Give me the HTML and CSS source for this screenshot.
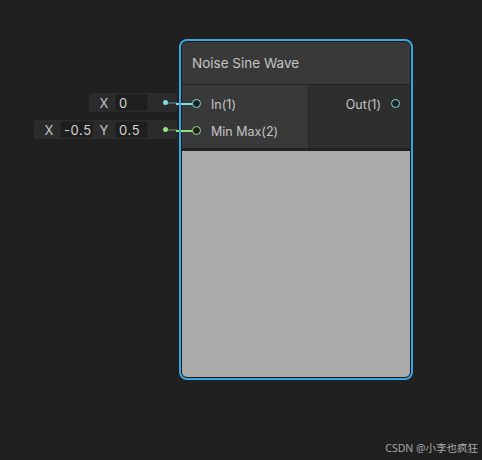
FILE: index.html
```html
<!DOCTYPE html>
<html>
<head>
<meta charset="utf-8">
<link rel="stylesheet" href="styles.css">
</head>
<body>
<div class="canvas">
  <div class="field-box fb-in">
    <span class="axis">X</span><span class="num">0</span>
    <span class="dot teal"></span><span class="stub teal-dim"></span>
  </div>
  <div class="field-box fb-mm">
    <span class="axis">X</span><span class="num">-0.5</span>
    <span class="axis">Y</span><span class="num">0.5</span>
    <span class="dot green"></span><span class="stub green-dim"></span>
  </div>

  <div class="node">
    <div class="node-inner">
      <div class="header">Noise Sine Wave</div>
      <div class="ports">
        <div class="inputs">
          <div class="port-row">
            <span class="wire teal"></span>
            <span class="port port-teal"></span>
            <span class="plabel">In(1)</span>
          </div>
          <div class="port-row">
            <span class="wire green"></span>
            <span class="port port-green"></span>
            <span class="plabel">Min Max(2)</span>
          </div>
        </div>
        <div class="outputs">
          <div class="port-row out">
            <span class="plabel">Out(1)</span>
            <span class="port port-teal"></span>
          </div>
        </div>
      </div>
      <div class="preview"></div>
    </div>
  </div>

  <div class="watermark">CSDN @小李也疯狂</div>
</div>
</body>
</html>
```
FILE: styles.css
```css
html, body {
  margin: 0;
  padding: 0;
  background: #202020;
}
body {
  width: 482px;
  height: 460px;
  overflow: hidden;
  font-family: Inter, "Noto Sans", sans-serif;
}
.canvas {
  position: relative;
  width: 482px;
  height: 460px;
}

/* inline value fields attached to input ports */
.field-box {
  position: absolute;
  height: 19px;
  box-sizing: border-box;
  background: #2b2b2b;
  display: flex;
  align-items: center;
  padding-left: 4px;
  border-radius: 2px 0 0 2px;
}
.fb-in { left: 89px; top: 93px; width: 88px; }
.fb-mm { left: 34px; top: 120px; width: 143px; }
.axis {
  width: 22px;
  text-align: center;
  color: #c4c4c4;
  font-size: 13px;
}
.num {
  width: 33px;
  height: 17px;
  box-sizing: border-box;
  background: #1e1e1e;
  border: 1px solid #252525;
  border-radius: 3px;
  color: #d4d4d4;
  font-size: 13px;
  letter-spacing: 0.6px;
  line-height: 16px;
  padding-left: 3px;
}
.dot {
  width: 5px;
  height: 5px;
  border-radius: 50%;
  margin-left: 15px;
  flex: none;
}
.stub {
  flex: 1;
  height: 2px;
}
.teal { background: #7fdde6; }
.green { background: #90e27c; }
.teal-dim { background: #3d5f62; }
.green-dim { background: #4a6446; }

/* node */
.node {
  position: absolute;
  left: 179px;
  top: 39px;
  width: 234px;
  height: 341px;
  box-sizing: border-box;
  padding: 2px;
}
.node::after {
  content: "";
  position: absolute;
  inset: 0;
  border: 2px solid #3aa5e2;
  border-radius: 8px;
  z-index: 3;
  pointer-events: none;
}
.node-inner {
  height: 100%;
  box-sizing: border-box;
  border: 1px solid #191919;
  border-radius: 6px;
  background: #393939;
  display: flex;
  flex-direction: column;
}
.header {
  height: 42px;
  line-height: 43px;
  padding-left: 10px;
  color: #c4c4c4;
  font-size: 13.5px;
  background: #393939;
  border-radius: 5px 5px 0 0;
  border-bottom: 1px solid #232323;
}
.ports {
  height: 63px;
  display: flex;
  border-bottom: 3px solid #232323;
}
.inputs {
  width: 128px;
  background: #393939;
  padding-top: 5px;
  box-sizing: border-box;
  border-right: 2px solid #2a2a2a;
}
.outputs {
  flex: 1;
  background: #2e2e2e;
  padding-top: 5px;
}
.port-row {
  position: relative;
  height: 27px;
  display: flex;
  align-items: center;
  padding-left: 10px;
}
.port-row.out {
  justify-content: flex-end;
  padding-left: 0;
  padding-right: 10px;
}
.port {
  width: 9px;
  height: 9px;
  box-sizing: border-box;
  border-radius: 50%;
  border: 1.6px solid;
  background: #1f1f1f;
  flex: none;
  position: relative;
  z-index: 2;
}
.port-teal { border-color: #7fdde6; }
.port-green { border-color: #90e27c; }
.plabel {
  color: #c4c4c4;
  font-size: 12.5px;
  margin-left: 10px;
  padding-top: 2px;
}
.out .plabel {
  margin-left: 0;
  margin-right: 10px;
}
.wire {
  position: absolute;
  left: -6px;
  width: 17px;
  height: 2px;
  top: 12.5px;
  z-index: 1;
}
.preview {
  flex: 1;
  background: #aaaaaa;
  border-radius: 0 0 5px 5px;
}

.watermark {
  position: absolute;
  right: 4px;
  top: 440px;
  font-family: "Noto Sans", "Noto Sans CJK SC", sans-serif;
  font-size: 10.5px;
  color: #a8a8a8;
}
```
